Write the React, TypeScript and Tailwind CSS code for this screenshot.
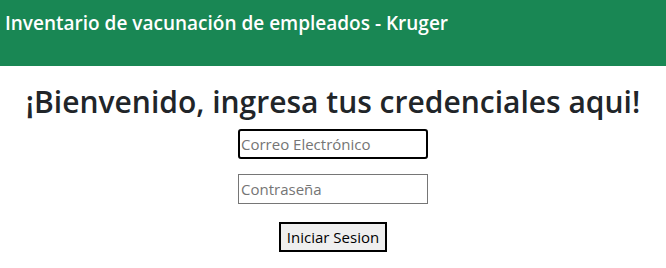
import React from 'react';

const font = { fontFamily: '"Open Sans", "Noto Sans", sans-serif' };

function LoginForm() {
  return (
    <form className='flex flex-col items-center' onSubmit={(e) => e.preventDefault()}>
      <input
        type='email'
        placeholder='Correo Electrónico'
        className='h-[30px] w-[190px] rounded-[3px] border-2 border-black bg-white px-[1px] text-[15px] text-black outline-none placeholder:text-[#757575]'
      />
      <input
        type='password'
        placeholder='Contraseña'
        className='mt-[15px] h-[30px] w-[190px] border border-[#767676] bg-white px-[2px] text-[15px] text-black outline-none placeholder:text-[#757575]'
      />
      <button type='submit' className='mt-[18px] h-[30px] w-[108px] border-2 border-black bg-[#efefef] text-[15px] text-black'>
        Iniciar Sesion
      </button>
    </form>
  );
}

export default function App() {
  return (
    <div className='min-h-[268px] w-full bg-white' style={font}>
      <header className='h-[66px] w-full bg-[#198754] px-[5px] pt-[9px]'>
        <h2 className='text-[19px] font-semibold leading-[28px] text-white'>Inventario de vacunación de empleados - Kruger</h2>
      </header>
      <main className='flex flex-col items-center'>
        <h1 className='mt-[17px] mb-[8px] text-[30px] font-semibold leading-[38px] text-[#212529]'>¡Bienvenido, ingresa tus credenciales aqui!</h1>
        <LoginForm />
      </main>
    </div>
  );
}
